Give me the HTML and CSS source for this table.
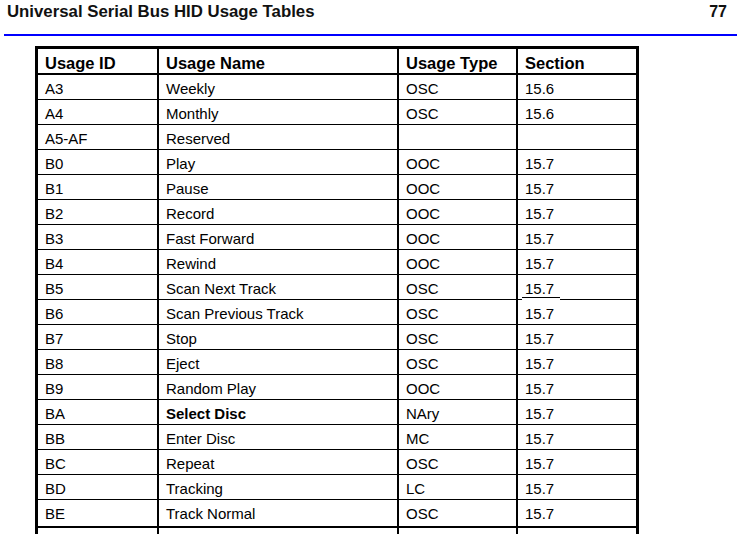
FILE: index.html
```html
<!DOCTYPE html>
<html lang="en">
<head>
<meta charset="utf-8">
<title>Universal Serial Bus HID Usage Tables</title>
<link rel="stylesheet" href="styles.css">
</head>
<body>
<header class="page-header">
  <span class="doc-title">Universal Serial Bus HID Usage Tables</span>
  <span class="page-num">77</span>
</header>
<div class="rule"></div>
<div class="usage-table">
  <div class="cell head">Usage ID</div><div class="cell head">Usage Name</div><div class="cell head">Usage Type</div><div class="cell head last">Section</div>
  <div class="cell">A3</div><div class="cell">Weekly</div><div class="cell">OSC</div><div class="cell last">15.6</div>
  <div class="cell">A4</div><div class="cell">Monthly</div><div class="cell">OSC</div><div class="cell last">15.6</div>
  <div class="cell">A5-AF</div><div class="cell">Reserved</div><div class="cell"></div><div class="cell last"></div>
  <div class="cell">B0</div><div class="cell">Play</div><div class="cell">OOC</div><div class="cell last">15.7</div>
  <div class="cell">B1</div><div class="cell">Pause</div><div class="cell">OOC</div><div class="cell last">15.7</div>
  <div class="cell">B2</div><div class="cell">Record</div><div class="cell">OOC</div><div class="cell last">15.7</div>
  <div class="cell">B3</div><div class="cell">Fast Forward</div><div class="cell">OOC</div><div class="cell last">15.7</div>
  <div class="cell">B4</div><div class="cell">Rewind</div><div class="cell">OOC</div><div class="cell last">15.7</div>
  <div class="cell">B5</div><div class="cell">Scan Next Track</div><div class="cell">OSC</div><div class="cell last glitch">15.7</div>
  <div class="cell">B6</div><div class="cell">Scan Previous Track</div><div class="cell">OSC</div><div class="cell last">15.7</div>
  <div class="cell">B7</div><div class="cell">Stop</div><div class="cell">OSC</div><div class="cell last">15.7</div>
  <div class="cell">B8</div><div class="cell">Eject</div><div class="cell">OSC</div><div class="cell last">15.7</div>
  <div class="cell">B9</div><div class="cell">Random Play</div><div class="cell">OOC</div><div class="cell last">15.7</div>
  <div class="cell">BA</div><div class="cell"><b>Select Disc</b></div><div class="cell">NAry</div><div class="cell last">15.7</div>
  <div class="cell">BB</div><div class="cell">Enter Disc</div><div class="cell">MC</div><div class="cell last">15.7</div>
  <div class="cell">BC</div><div class="cell">Repeat</div><div class="cell">OSC</div><div class="cell last">15.7</div>
  <div class="cell">BD</div><div class="cell">Tracking</div><div class="cell">LC</div><div class="cell last">15.7</div>
  <div class="cell end">BE</div><div class="cell end">Track Normal</div><div class="cell end">OSC</div><div class="cell end last">15.7</div>
  <div class="cell stub"></div><div class="cell stub"></div><div class="cell stub"></div><div class="cell stub last"></div>
</div>
</body>
</html>
```

FILE: styles.css
```css
html, body {
  margin: 0;
  padding: 0;
  background: #ffffff;
  overflow: hidden;
}

body {
  font-family: "Liberation Sans", Arial, sans-serif;
  color: #000000;
  width: 737px;
  height: 534px;
}

.page-header {
  display: flex;
  justify-content: space-between;
  align-items: flex-start;
  height: 34px;
  padding: 3px 10px 0 7px;
  box-sizing: border-box;
  font-weight: bold;
  line-height: 18px;
  color: #111111;
}

.doc-title {
  font-size: 16.8px;
}

.page-num {
  font-size: 16px;
}

.rule {
  height: 2px;
  margin-left: 4px;
  background: #0000ff;
}

.usage-table {
  display: grid;
  grid-template-columns: 121px 240px 119px 118px;
  width: max-content;
  margin: 10px 0 0 35px;
  border: 3px solid #000000;
  border-bottom: none;
}

.cell {
  position: relative;
  box-sizing: border-box;
  height: 25px;
  padding: 4px 4px 0 7px;
  font-size: 15px;
  line-height: 20px;
  border-right: 2px solid #000000;
  border-bottom: 1px solid #000000;
  white-space: nowrap;
}

.cell.last {
  border-right: none;
}

.cell.head {
  height: 26px;
  padding-top: 4px;
  font-size: 16.5px;
  font-weight: bold;
  border-bottom-width: 2px;
}

.cell.end {
  height: 28px;
  border-bottom-width: 2px;
}

.cell.stub {
  height: 6px;
  border-bottom: none;
}

.cell.glitch::after {
  content: "";
  position: absolute;
  left: 4px;
  bottom: -1px;
  width: 38px;
  height: 2px;
  border-top: 1px solid #000000;
  background: #ffffff;
}
```
